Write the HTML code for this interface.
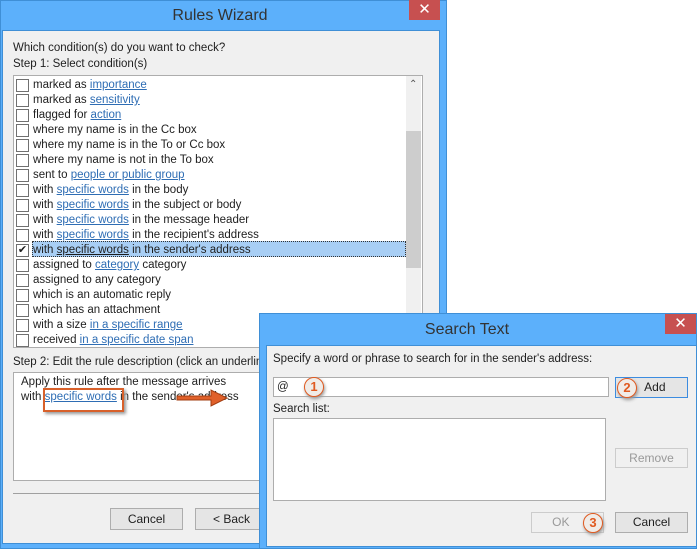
<!DOCTYPE html><html><head><style>
body{margin:0;width:697px;height:549px;background:#fff;position:relative;overflow:hidden;font-family:"Liberation Sans",sans-serif;font-size:11.5px;color:#1e1e1e}
.a{position:absolute}
.win{background:#5cb0fb;border:1px solid #3f8fd6;box-sizing:border-box}
.body{background:#f0f0f0;border:1px solid #3f8fd6;position:absolute}
.close{background:#c75050;color:#fff;text-align:center;font-size:15px;line-height:20px}
.title{text-align:center;font-size:16px;color:#333}
.row{position:absolute;left:16px;height:15px;line-height:15px;white-space:nowrap;padding-left:17px}
.cb{position:absolute;left:0;top:1px;width:11px;height:11px;border:1px solid #707070;background:#fff;font-size:11px;line-height:11px;text-align:center}
u{color:#2e6db4;text-decoration:underline}
.btn{position:absolute;background:#e5e5e5;border:1px solid #adadad;text-align:center;box-sizing:border-box;font-size:12px}
.num{position:absolute;width:18px;height:18px;border-radius:50%;background:#f0ece8;border:1.5px solid #e05a20;color:#e05a20;font-weight:bold;font-size:13px;text-align:center;line-height:18px;box-shadow:1px 2px 3px #999}
</style></head><body>
<div class="a win" style="left:0;top:0;width:447px;height:549px"></div>
<div class="a close" style="left:409px;top:0;width:31px;height:20px">✕</div>
<div class="a title" style="left:0;top:7px;width:440px">Rules Wizard</div>
<div class="body" style="left:2px;top:30px;width:436px;height:512px"></div>
<div class="a" style="left:13px;top:42px">Which condition(s) do you want to check?</div>
<div class="a" style="left:13px;top:58px">Step 1: Select condition(s)</div>
<div class="a" style="left:13px;top:75px;width:408px;height:271px;background:#fff;border:1px solid #adadad"></div>
<div class="a" style="left:406px;top:76px;width:15px;height:270px;background:#f0f0f0"></div>
<div class="a" style="left:406px;top:131px;width:15px;height:137px;background:#cdcdcd"></div>
<div class="a" style="left:409px;top:79px;font-size:10px;color:#555">⌃</div>
<div class="a" style="left:32px;top:241px;width:372px;height:14px;background:#a8cef4;border:1px dotted #333"></div>
<div class="row" style="top:78px"><span class="cb"></span>marked as <u>importance</u></div>
<div class="row" style="top:93px"><span class="cb"></span>marked as <u>sensitivity</u></div>
<div class="row" style="top:108px"><span class="cb"></span>flagged for <u>action</u></div>
<div class="row" style="top:123px"><span class="cb"></span>where my name is in the Cc box</div>
<div class="row" style="top:138px"><span class="cb"></span>where my name is in the To or Cc box</div>
<div class="row" style="top:153px"><span class="cb"></span>where my name is not in the To box</div>
<div class="row" style="top:168px"><span class="cb"></span>sent to <u>people or public group</u></div>
<div class="row" style="top:183px"><span class="cb"></span>with <u>specific words</u> in the body</div>
<div class="row" style="top:198px"><span class="cb"></span>with <u>specific words</u> in the subject or body</div>
<div class="row" style="top:213px"><span class="cb"></span>with <u>specific words</u> in the message header</div>
<div class="row" style="top:228px"><span class="cb"></span>with <u>specific words</u> in the recipient's address</div>
<div class="row" style="top:243px"><span class="cb">✔</span>with <span style="text-decoration:underline">specific words</span> in the sender's address</div>
<div class="row" style="top:258px"><span class="cb"></span>assigned to <u>category</u> category</div>
<div class="row" style="top:273px"><span class="cb"></span>assigned to any category</div>
<div class="row" style="top:288px"><span class="cb"></span>which is an automatic reply</div>
<div class="row" style="top:303px"><span class="cb"></span>which has an attachment</div>
<div class="row" style="top:318px"><span class="cb"></span>with a size <u>in a specific range</u></div>
<div class="row" style="top:333px"><span class="cb"></span>received <u>in a specific date span</u></div>
<div class="a" style="left:13px;top:356px;white-space:nowrap">Step 2: Edit the rule description (click an underlined value)</div>
<div class="a" style="left:13px;top:372px;width:420px;height:107px;background:#fff;border:1px solid #adadad"></div>
<div class="a" style="left:21px;top:376px">Apply this rule after the message arrives</div>
<div class="a" style="left:21px;top:391px;white-space:nowrap">with <u>specific words</u> in the sender's address</div>
<div class="a" style="left:43px;top:388px;width:77px;height:20px;border:2px solid #d8602a;box-shadow:2px 2px 3px #999"></div>
<svg class="a" style="left:175px;top:388px" width="60" height="20"><path d="M2 8h34v-6l16 8-16 8v-6H2z" fill="#e0602a" stroke="#a03c10"/></svg>
<div class="a" style="left:13px;top:493px;width:420px;height:1px;background:#a0a0a0"></div>
<div class="btn" style="left:110px;top:508px;width:73px;height:22px;line-height:20px">Cancel</div>
<div class="btn" style="left:195px;top:508px;width:73px;height:22px;line-height:20px">&lt; Back</div>

<div class="a win" style="left:259px;top:313px;width:438px;height:236px"></div>
<div class="a close" style="left:665px;top:314px;width:31px;height:20px">✕</div>
<div class="a title" style="left:259px;top:321px;width:416px">Search Text</div>
<div class="body" style="left:266px;top:345px;width:429px;height:200px"></div>
<div class="a" style="left:273px;top:353px;white-space:nowrap">Specify a word or phrase to search for in the sender's address:</div>
<div class="a" style="left:273px;top:377px;width:331px;height:18px;background:#fff;border:1px solid #adadad;line-height:18px;padding-left:3px;box-sizing:content-box">@</div>
<div class="num" style="left:304px;top:377px">1</div>
<div class="btn" style="left:615px;top:377px;width:73px;height:21px;line-height:19px;border-color:#3c8ce0">&nbsp;&nbsp;Add</div>
<div class="num" style="left:617px;top:378px">2</div>
<div class="a" style="left:273px;top:403px">Search list:</div>
<div class="a" style="left:273px;top:418px;width:331px;height:81px;background:#fff;border:1px solid #adadad"></div>
<div class="btn" style="left:615px;top:448px;width:73px;height:20px;line-height:18px;color:#999;background:#f0f0f0;border-color:#ccc">Remove</div>
<div class="btn" style="left:531px;top:512px;width:73px;height:21px;line-height:19px;color:#999;background:#f0f0f0;border-color:#ccc">OK&nbsp;&nbsp;&nbsp;&nbsp;</div>
<div class="num" style="left:583px;top:513px">3</div>
<div class="btn" style="left:615px;top:512px;width:73px;height:21px;line-height:19px">Cancel</div>
</body></html>
